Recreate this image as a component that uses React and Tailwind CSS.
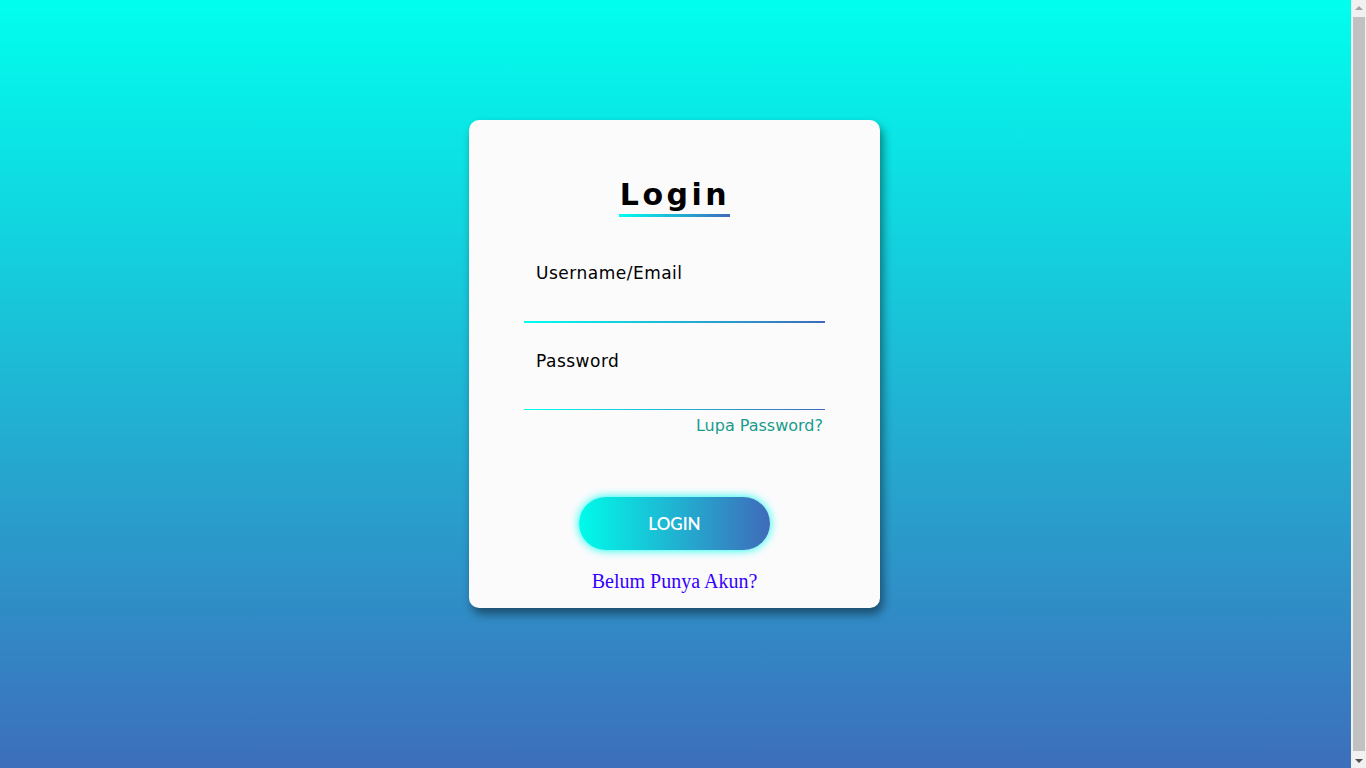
import React, { useState } from 'react';

const Field = ({ label, type, value, onChange, thick }) => (
  <div className="relative">
    <label className="block pl-3 pt-[12px] text-[17px] leading-5 tracking-[0.5px] text-black font-['DejaVu_Sans',sans-serif]">
      {label}
    </label>
    <input
      type={type}
      value={value}
      onChange={(e) => onChange(e.target.value)}
      className="block w-full h-[38px] bg-transparent px-3 outline-none text-[16px] font-['DejaVu_Sans',sans-serif]"
    />
    <div className={`${thick ? 'h-[2px]' : 'h-px'} w-full bg-[linear-gradient(to_right,#00ffee,#3f6abb)]`}></div>
  </div>
);

const FakeScrollbar = () => (
  <div className="fixed top-0 right-0 w-[15px] h-screen bg-[#f1f1f1] flex flex-col items-center">
    <div className="h-[15px] flex items-center justify-center">
      <div className="w-0 h-0 border-l-[4px] border-r-[4px] border-b-[4px] border-l-transparent border-r-transparent border-b-[#a3a3a3]"></div>
    </div>
    <div className="flex-1 w-[12px] bg-[#c1c1c1] my-[2px]"></div>
    <div className="h-[15px] flex items-center justify-center">
      <div className="w-0 h-0 border-l-[4px] border-r-[4px] border-t-[4px] border-l-transparent border-r-transparent border-t-[#505050]"></div>
    </div>
  </div>
);

export default function App() {
  const [user, setUser] = useState('');
  const [pass, setPass] = useState('');

  return (
    <div className="w-[calc(100%-15px)]">
      <div className="min-h-[785px] w-full bg-[linear-gradient(to_bottom,#00ffee,#3e6bba)] pt-[120px]">
        <div className="mx-auto w-[411px] h-[488px] rounded-[10px] bg-[#fbfbfc] shadow-[3px_6px_10px_rgba(0,0,0,0.45)] px-[55px] pt-[57px] -translate-x-px">
          <div className="flex justify-center">
            <h1 className="relative pb-[4px] text-[30px] leading-9 font-bold tracking-[3.5px] text-black font-['DejaVu_Sans',sans-serif] pl-[1px]">
              Login
              <span className="absolute left-0 right-0 bottom-0 h-[3px] bg-[linear-gradient(to_right,#00ffee,#3f6abb)]"></span>
            </h1>
          </div>

          <form className="mt-[34px]" onSubmit={(e) => e.preventDefault()}>
            <Field label="Username/Email" type="text" value={user} onChange={setUser} thick />
            <div className="mt-[16px]">
              <Field label="Password" type="password" value={pass} onChange={setPass} />
            </div>
            <div className="flex justify-end pr-[2px] mt-[6px]">
              <a href="#" className="text-[16px] leading-5 text-[#179b8c] font-['DejaVu_Sans',sans-serif]">
                Lupa Password?
              </a>
            </div>

            <div className="flex justify-center mt-[61px]">
              <button
                type="submit"
                className="w-[191px] h-[53px] rounded-full bg-[linear-gradient(to_right,#00fbe9,#3f6bba)] shadow-[0_0_10px_#00fff0] text-white text-[17px] font-semibold font-['Lato',sans-serif]"
              >
                LOGIN
              </button>
            </div>

            <div className="flex justify-center mt-[19px]">
              <a href="#" className="text-[20px] leading-6 text-[#3300ff] font-['Liberation_Serif',serif]">
                Belum Punya Akun?
              </a>
            </div>
          </form>
        </div>
      </div>
      <FakeScrollbar />
    </div>
  );
}
